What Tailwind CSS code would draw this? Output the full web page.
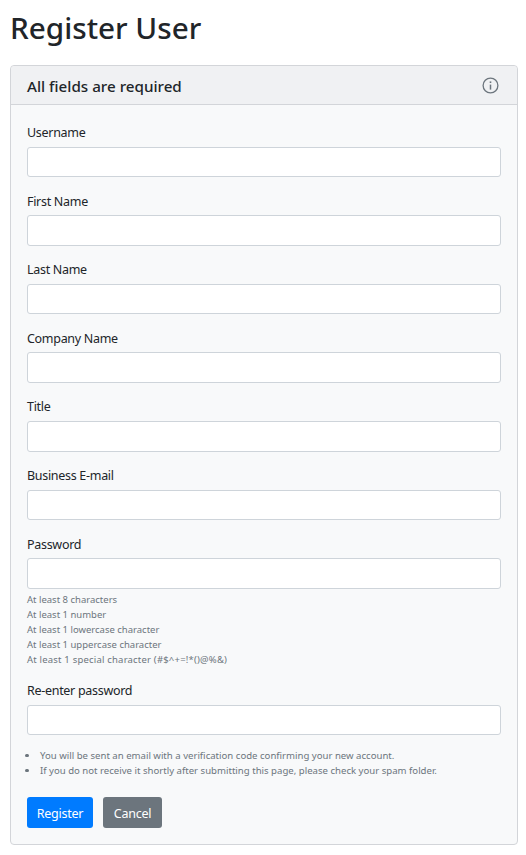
<!DOCTYPE html>
<html lang="en">
<head>
    <meta charset="UTF-8">
    <meta name="viewport" content="width=device-width, initial-scale=1.0">
    <title>Register User</title>
    <script src="https://cdn.jsdelivr.net/npm/@tailwindcss/browser@4"></script>
</head>
<body class="bg-white min-h-screen font-['Noto_Sans',sans-serif] text-[#212529]">
    <div class="pl-[10px] pr-[8px]">
        <h1 class="pt-[8px] h-[65px] text-[29.7px] leading-[40px] font-medium">Register User</h1>

        <div class="border border-[#d3d5d9] rounded-[4px] bg-[#f8f9fa]">
            <div class="flex items-center justify-between h-[39px] pl-[16px] pr-[18px] pt-[3px] bg-[#f0f1f3] border-b border-[#d3d5d9] rounded-t-[4px]">
                <h2 class="text-[15.2px] font-medium">All fields are required</h2>
                <svg class="w-[17px] h-[17px] mb-[3px] text-[#6c757d]" viewBox="0 0 17 17" fill="none" stroke="currentColor">
                    <circle cx="8.5" cy="8.5" r="7.4" stroke-width="1.3"/>
                    <path d="M8.5 7.6v5" stroke-width="1.5"/>
                    <path d="M8.5 4.4v1.6" stroke-width="1.6"/>
                </svg>
            </div>

            <form class="px-[16px] pt-[16px] pb-[16px]">
                <div class="h-[68.6px]">
                    <label class="block h-[25.7px] text-[12.5px] leading-[24px] tracking-[-0.3px]">Username</label>
                    <input type="text" class="block w-full h-[30.6px] bg-white border border-[#ced4da] rounded-[3px]">
                </div>
                <div class="h-[68.6px]">
                    <label class="block h-[25.7px] text-[12.5px] leading-[24px] tracking-[-0.3px]">First Name</label>
                    <input type="text" class="block w-full h-[30.6px] bg-white border border-[#ced4da] rounded-[3px]">
                </div>
                <div class="h-[68.6px]">
                    <label class="block h-[25.7px] text-[12.5px] leading-[24px] tracking-[-0.3px]">Last Name</label>
                    <input type="text" class="block w-full h-[30.6px] bg-white border border-[#ced4da] rounded-[3px]">
                </div>
                <div class="h-[68.6px]">
                    <label class="block h-[25.7px] text-[12.5px] leading-[24px] tracking-[-0.3px]">Company Name</label>
                    <input type="text" class="block w-full h-[30.6px] bg-white border border-[#ced4da] rounded-[3px]">
                </div>
                <div class="h-[68.6px]">
                    <label class="block h-[25.7px] text-[12.5px] leading-[24px] tracking-[-0.3px]">Title</label>
                    <input type="text" class="block w-full h-[30.6px] bg-white border border-[#ced4da] rounded-[3px]">
                </div>
                <div class="h-[68.6px]">
                    <label class="block h-[25.7px] text-[12.5px] leading-[24px] tracking-[-0.3px]">Business E-mail</label>
                    <input type="text" class="block w-full h-[30.6px] bg-white border border-[#ced4da] rounded-[3px]">
                </div>
                <div class="mb-[12px]">
                    <label class="block h-[25.7px] text-[12.5px] leading-[24px] tracking-[-0.3px]">Password</label>
                    <input type="password" class="block w-full h-[30.6px] bg-white border border-[#ced4da] rounded-[3px]">
                    <ul class="mt-[3px] text-[9.5px] leading-[15px] text-[#6c757d]">
                        <li>At least 8 characters</li>
                        <li>At least 1 number</li>
                        <li>At least 1 lowercase character</li>
                        <li>At least 1 uppercase character</li>
                        <li class="tracking-[0.2px]">At least 1 special character (#$^+=!*()@%&amp;)</li>
                    </ul>
                </div>
                <div class="mb-[13px]">
                    <label class="block h-[25.7px] text-[12.5px] leading-[24px] tracking-[-0.3px]">Re-enter password</label>
                    <input type="password" class="block w-full h-[30.6px] bg-white border border-[#ced4da] rounded-[3px]">
                </div>
                <ul class="-ml-[2px] text-[9.6px] leading-[15px] text-[#6c757d] mb-[19px]">
                    <li class="flex items-center gap-[11.5px]"><span class="w-[3.5px] h-[3.5px] rounded-full bg-[#6c757d]"></span>You will be sent an email with a verification code confirming your new account.</li>
                    <li class="flex items-center gap-[11.5px]"><span class="w-[3.5px] h-[3.5px] rounded-full bg-[#6c757d]"></span>If you do not receive it shortly after submitting this page, please check your spam folder.</li>
                </ul>
                <div class="flex gap-[10px]">
                    <button type="button" class="w-[66px] h-[31px] pt-[3px] bg-[#007bff] text-white text-[12.5px] tracking-[-0.25px] rounded-[3px]">Register</button>
                    <button type="button" class="w-[59px] h-[31px] pt-[3px] bg-[#6c757d] text-white text-[12.5px] tracking-[-0.25px] rounded-[3px]">Cancel</button>
                </div>
            </form>
        </div>
    </div>
</body>
</html>
